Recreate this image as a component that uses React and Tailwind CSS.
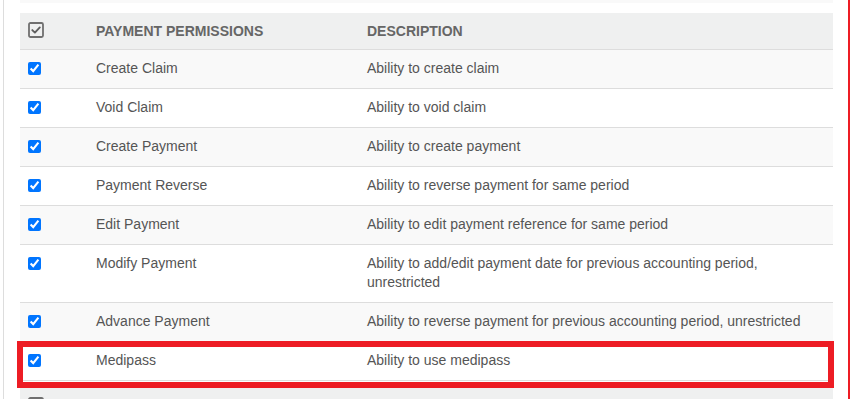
import React from 'react';

const rows = [
  { name: 'Create Claim', desc: 'Ability to create claim' },
  { name: 'Void Claim', desc: 'Ability to void claim' },
  { name: 'Create Payment', desc: 'Ability to create payment' },
  { name: 'Payment Reverse', desc: 'Ability to reverse payment for same period' },
  { name: 'Edit Payment', desc: 'Ability to edit payment reference for same period' },
  { name: 'Modify Payment', desc: 'Ability to add/edit payment date for previous accounting period, unrestricted' },
  { name: 'Advance Payment', desc: 'Ability to reverse payment for previous accounting period, unrestricted' },
  { name: 'Medipass', desc: 'Ability to use medipass' },
];

function HeaderCheck() {
  return (
    <svg width="16" height="16" viewBox="0 0 16 16" className="block">
      <rect x="1" y="1" width="14" height="14" rx="1.5" fill="none" stroke="#6f6f6f" strokeWidth="1.8" />
      <path d="M4.3 8.1 L6.9 10.6 L11.8 5.4" fill="none" stroke="#5f5f5f" strokeWidth="1.9" strokeLinecap="round" strokeLinejoin="round" />
    </svg>
  );
}

function HeaderRow({ title, desc }) {
  return (
    <div className="grid grid-cols-[68px_271px_474px] bg-[#eff0f0] h-[36px] shrink-0 text-[14px] font-bold text-[#666] uppercase">
      <div className="px-2 pt-[9px]">
        <HeaderCheck />
      </div>
      <div className="px-2 py-2 leading-5">{title}</div>
      <div className="px-2 py-2 leading-5">{desc}</div>
    </div>
  );
}

export default function App() {
  return (
    <div
      className="relative w-[854px] h-[399px] overflow-hidden bg-white flex"
      style={{ fontFamily: '"Liberation Sans", Arial, sans-serif' }}
    >
      <div className="w-[3px] shrink-0" />
      <div className="w-px shrink-0 bg-[#dddddd]" />
      <div className="w-[16px] shrink-0" />

      <div className="w-[813px] shrink-0 flex flex-col">
        <div className="h-[3px] bg-[#f9f9f9] shrink-0" />
        <div className="h-[10px] shrink-0" />

        <HeaderRow title="Payment Permissions" desc="Description" />
        {rows.map((r, i) => (
          <div
            key={r.name}
            className={`grid grid-cols-[68px_271px_474px] shrink-0 border-t border-[#dddddd] text-[14px] leading-[19px] text-[#555] ${
              i % 2 === 0 ? 'bg-[#f9f9f9]' : 'bg-white'
            } ${i === rows.length - 1 ? 'border-b' : ''}`}
          >
            <div className="px-2 pt-[9px] pb-[10px]">
              <input type="checkbox" defaultChecked readOnly className="block m-0 mt-[3px] w-[13px] h-[13px] accent-[#0075ff]" />
            </div>
            <div className="px-2 pt-[9px] pb-[10px]">{r.name}</div>
            <div className="px-2 pt-[9px] pb-[10px]">{r.desc}</div>
          </div>
        ))}

        <div className="h-[7px] shrink-0" />
        {/* next permissions table, cut off by the viewport */}
        <HeaderRow title="" desc="" />
      </div>

      <div className="w-[15px] shrink-0" />
      <div className="w-[2px] shrink-0 bg-[#ed1c24]" />

      {/* highlight annotation */}
      <div className="absolute left-[17px] top-[341px] w-[817px] h-[47px] border-[6px] border-[#ed1c24]" />
    </div>
  );
}
